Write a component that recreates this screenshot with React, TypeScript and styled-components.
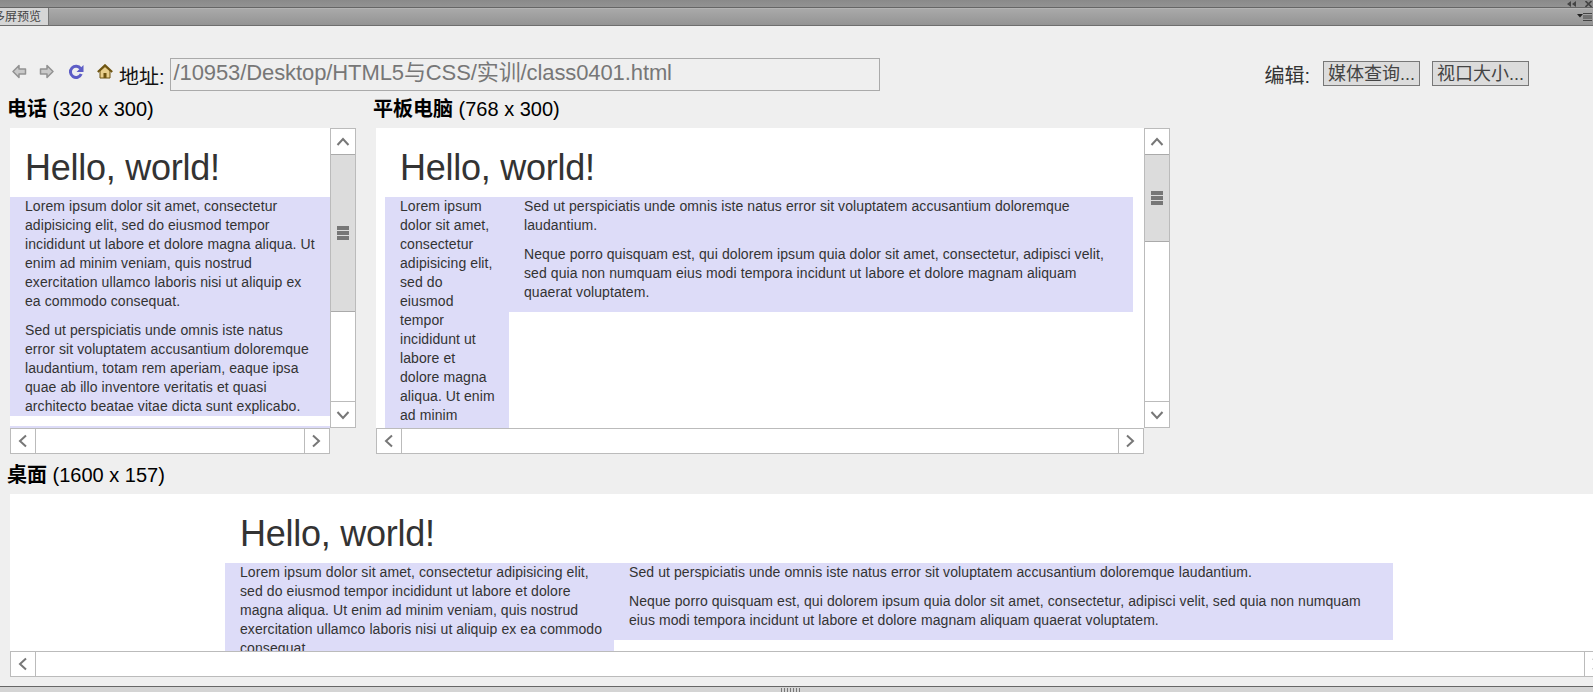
import React from 'react';
import styled, { createGlobalStyle } from 'styled-components';

const GlobalStyle = createGlobalStyle`
    html, body {
        margin: 0;
        height: 100%;
        overflow: hidden;
        background: #efefef;
        font-family: "Liberation Sans", "Noto Sans CJK SC", sans-serif;
    }
`;

const Page = styled.div`
    height: 692px;
    width: 1593px;
    display: flex;
    flex-direction: column;
    overflow: hidden;
`;

const TitleBar = styled.div`
    height: 7px;
    background: linear-gradient(#8a8a8a, #939393);
    border-bottom: 1px solid #666;
    display: flex;
    justify-content: flex-end;
    align-items: center;
    gap: 9px;
    padding-right: 1px;
`;

const TabStrip = styled.div`
    height: 16px;
    background: linear-gradient(#a9a9a9, #949494);
    border-top: 1px solid #b4b4b4;
    border-bottom: 1px solid #6e6e6e;
    display: flex;
    justify-content: space-between;
    align-items: center;
    padding-right: 1px;
`;

const Tab = styled.div`
    width: 48px;
    height: 17px;
    margin-top: -1px;
    overflow: hidden;
    white-space: nowrap;
    background: #d6d6d6;
    border-right: 1px solid #777;
    font-size: 12px;
    line-height: 18px;
    color: #444;
    text-indent: -7px;
`;

const Workspace = styled.main`
    flex: 1;
    min-height: 0;
    overflow: hidden;
    padding-left: 10px;
`;

const Toolbar = styled.div`
    height: 71px;
    box-sizing: border-box;
    margin-left: -10px;
    padding: 32px 64px 0 12px;
    display: flex;
    align-items: flex-start;
`;

const NavIcon = styled.svg<{ $gap: number }>`
    flex: none;
    margin-top: 6px;
    margin-right: ${props => props.$gap}px;
`;

const FieldLabel = styled.span`
    font-size: 20px;
    line-height: 24px;
    margin-top: 7px;
    color: #111;
    white-space: nowrap;
`;

const AddressField = styled.div`
    width: 710px;
    height: 33px;
    margin-left: 5px;
    box-sizing: border-box;
    border: 1px solid #aaa;
    padding-left: 3px;
    font-size: 22px;
    line-height: 27px;
    letter-spacing: -0.1px;
    color: #777;
    white-space: nowrap;
    overflow: hidden;
`;

const EditGroup = styled.div`
    margin-left: auto;
    display: flex;
    align-items: flex-start;
`;

const EditLabel = styled(FieldLabel)`
    margin-top: 6px;
    margin-right: 13px;
    color: #333;
`;

const EditButton = styled.div`
    width: 97px;
    height: 25px;
    margin-top: 3px;
    margin-right: 12px;
    box-sizing: border-box;
    border: 1px solid #777;
    background: #dcdcdc;
    font-size: 18px;
    line-height: 24px;
    text-align: center;
    color: #444;
    white-space: nowrap;
    overflow: hidden;

    &:last-child {
        margin-right: 0;
    }
`;

const DeviceRow = styled.div`
    display: flex;
    gap: 20px;
`;

const Device = styled.section`
    flex: none;
`;

const DesktopDevice = styled(Device)`
    margin-top: 9px;
`;

const DeviceLabel = styled.div`
    height: 24px;
    line-height: 24px;
    margin: 0 0 7px -3px;
    font-size: 20px;
    color: #000;
    white-space: nowrap;

    b {
        font-weight: 700;
    }
`;

const Frame = styled.div<{ $width: number; $height: number }>`
    display: grid;
    grid-template-columns: ${props => props.$width}px 26px;
    grid-template-rows: ${props => props.$height}px 26px;
`;

const Viewport = styled.div`
    background: #fff;
    overflow: hidden;
`;

const Container = styled.div<{ $inset: number }>`
    margin-left: ${props => props.$inset}px;
    margin-right: ${props => props.$inset}px;
`;

const Heading = styled.h1<{ $inset: number }>`
    margin: 0;
    padding: 20px 0 9px ${props => props.$inset}px;
    font-size: 36px;
    font-weight: 500;
    line-height: 40px;
    letter-spacing: -0.25px;
    color: #333;
`;

const Columns = styled.div<{ $left: number; $right: number }>`
    display: grid;
    grid-template-columns: ${props => props.$left}px ${props => props.$right}px;
    align-items: start;
`;

const Band = styled.div`
    background: #dddcf8;
    padding: 0 15px;
    overflow: hidden;
`;

const SideBand = styled(Band)<{ $trim: number }>`
    padding-right: ${props => props.$trim}px;
`;

const StackedBand = styled(Band)`
    margin-bottom: 10px;

    p:last-child {
        margin-bottom: 0;
    }
`;

const Copy = styled.p`
    margin: 0 0 10px;
    font-size: 14px;
    line-height: 19px;
    letter-spacing: 0.085px;
    color: #333;
`;

const VScroll = styled.div`
    display: flex;
    flex-direction: column;
    box-sizing: border-box;
    height: 100%;
    background: #fff;
    border: 1px solid #bbb;
`;

const ArrowBox = styled.div`
    flex: none;
    height: 25px;
    display: flex;
    align-items: center;
    justify-content: center;
`;

const ArrowBottom = styled(ArrowBox)`
    margin-top: auto;
    border-top: 1px solid #bbb;
`;

const Thumb = styled.div<{ $height: number }>`
    height: ${props => props.$height}px;
    box-sizing: border-box;
    background: #dcdcdc;
    border-top: 1px solid #aaa;
    border-bottom: 1px solid #aaa;
    display: flex;
    align-items: center;
    justify-content: center;
`;

const Grip = styled.div`
    width: 12px;
    height: 14px;
    background: repeating-linear-gradient(#777 0 4px, transparent 4px 5px);
`;

const HScroll = styled.div`
    height: 26px;
    box-sizing: border-box;
    display: flex;
    justify-content: space-between;
    background: #fff;
    border: 1px solid #bbb;
`;

const HButton = styled.div<{ $end?: boolean }>`
    width: 24px;
    display: flex;
    align-items: center;
    justify-content: center;
    ${props => props.$end ? 'border-left: 1px solid #bbb;' : 'border-right: 1px solid #bbb;'}
`;

const StatusBar = styled.div`
    height: 5px;
    background: #d4d4d4;
    border-top: 1px solid #666;
    display: flex;
    justify-content: center;
    align-items: flex-end;
`;

const StatusGrip = styled.div`
    width: 20px;
    height: 4px;
    margin-right: 11px;
    background: repeating-linear-gradient(90deg, #777 0 1px, transparent 1px 3px);
`;

const Chevron: React.FC<{ points: string }> = ({ points }) => (
    <svg width="14" height="14" viewBox="0 0 14 14">
        <polyline points={points} fill="none" stroke="#777" strokeWidth="2" />
    </svg>
);

const UP = '1.5,10 7,4 12.5,10';
const DOWN = '1.5,4 7,10 12.5,4';
const LEFT = '10,1.5 4,7 10,12.5';
const RIGHT = '3,1.5 9,7 3,12.5';

const LOREM = 'Lorem ipsum dolor sit amet, consectetur adipisicing elit, sed do eiusmod tempor incididunt ut labore et dolore magna aliqua. Ut enim ad minim veniam, quis nostrud exercitation ullamco laboris nisi ut aliquip ex ea commodo consequat.';
const SED_LONG = 'Sed ut perspiciatis unde omnis iste natus error sit voluptatem accusantium doloremque laudantium, totam rem aperiam, eaque ipsa quae ab illo inventore veritatis et quasi architecto beatae vitae dicta sunt explicabo.';
const SED = 'Sed ut perspiciatis unde omnis iste natus error sit voluptatem accusantium doloremque laudantium.';
const NEQUE = 'Neque porro quisquam est, qui dolorem ipsum quia dolor sit amet, consectetur, adipisci velit, sed quia non numquam eius modi tempora incidunt ut labore et dolore magnam aliquam quaerat voluptatem.';

const VerticalBar: React.FC<{ thumb: number }> = ({ thumb }) => (
    <VScroll>
        <ArrowBox><Chevron points={UP} /></ArrowBox>
        <Thumb $height={thumb}><Grip /></Thumb>
        <ArrowBottom><Chevron points={DOWN} /></ArrowBottom>
    </VScroll>
);

const HorizontalBar: React.FC = () => (
    <HScroll>
        <HButton><Chevron points={LEFT} /></HButton>
        <HButton $end><Chevron points={RIGHT} /></HButton>
    </HScroll>
);

const SplitContent: React.FC<{ left: number; right: number; trim: number }> = ({ left, right, trim }) => (
    <Columns $left={left} $right={right}>
        <SideBand $trim={trim}><Copy>{LOREM}</Copy></SideBand>
        <Band>
            <Copy>{SED}</Copy>
            <Copy>{NEQUE}</Copy>
        </Band>
    </Columns>
);

const BackIcon: React.FC<{ flip?: boolean; gap: number }> = ({ flip, gap }) => (
    <NavIcon $gap={gap} width="15" height="15" viewBox="0 0 15 15">
        <path
            d={flip ? 'M14 7.5 L8 1.5 V5 H1.5 V10 H8 V13.5 Z' : 'M1 7.5 L7 1.5 V5 H13.5 V10 H7 V13.5 Z'}
            fill="#c9c9c9"
            stroke="#929292"
            strokeWidth="1.5"
            strokeLinejoin="round"
        />
    </NavIcon>
);

const RefreshIcon: React.FC = () => (
    <NavIcon $gap={13} width="16" height="16" viewBox="0 0 16 16">
        <path d="M12.6 4.6 A5.6 5.6 0 1 0 13.2 10" fill="none" stroke="#5d5dc6" strokeWidth="3" />
        <path d="M15.5 1 V8 H8.5 Z" fill="#5d5dc6" />
    </NavIcon>
);

const HomeIcon: React.FC = () => (
    <NavIcon $gap={6} width="16" height="15" viewBox="0 0 16 15">
        <path d="M3 7 V14 H13 V7 L8 2.5 Z" fill="#e9cf8b" stroke="#6e5410" strokeWidth="1" />
        <path d="M0.8 8 L8 1.2 L15.2 8" fill="none" stroke="#6e5410" strokeWidth="2" />
        <rect x="6.5" y="9" width="3" height="5" fill="#6e5410" />
    </NavIcon>
);

const App: React.FC = () => (
    <Page>
        <GlobalStyle />
        <TitleBar>
            <svg width="9" height="6" viewBox="0 0 9 6">
                <path d="M4 0 V6 L0 3 Z M9 0 V6 L5 3 Z" fill="#444" />
            </svg>
            <svg width="7" height="6" viewBox="0 0 7 6">
                <path d="M0.5 0 L6.5 6 M6.5 0 L0.5 6" stroke="#444" strokeWidth="1.6" />
            </svg>
        </TitleBar>
        <TabStrip>
            <Tab>多屏预览</Tab>
            <svg width="15" height="8" viewBox="0 0 15 8">
                <path d="M0 1 H6 L3 4.5 Z" fill="#222" />
                <path d="M6 0.5 H15 M6 3 H15 M6 5 H15 M6 7.5 H15" stroke="#444" strokeWidth="1" />
            </svg>
        </TabStrip>
        <Workspace>
            <Toolbar>
                <BackIcon gap={12} />
                <BackIcon flip gap={14} />
                <RefreshIcon />
                <HomeIcon />
                <FieldLabel>地址:</FieldLabel>
                <AddressField>/10953/Desktop/HTML5与CSS/实训/class0401.html</AddressField>
                <EditGroup>
                    <EditLabel>编辑:</EditLabel>
                    <EditButton>媒体查询...</EditButton>
                    <EditButton>视口大小...</EditButton>
                </EditGroup>
            </Toolbar>
            <DeviceRow>
                <Device>
                    <DeviceLabel><b>电话</b> (320 x 300)</DeviceLabel>
                    <Frame $width={320} $height={300}>
                        <Viewport>
                            <Heading $inset={15}>Hello, world!</Heading>
                            <StackedBand>
                                <Copy>{LOREM}</Copy>
                                <Copy>{SED_LONG}</Copy>
                            </StackedBand>
                            <Band><Copy>{NEQUE}</Copy></Band>
                        </Viewport>
                        <VerticalBar thumb={158} />
                        <HorizontalBar />
                    </Frame>
                </Device>
                <Device>
                    <DeviceLabel><b>平板电脑</b> (768 x 300)</DeviceLabel>
                    <Frame $width={768} $height={300}>
                        <Viewport>
                            <Container $inset={9}>
                                <Heading $inset={15}>Hello, world!</Heading>
                                <SplitContent left={124} right={624} trim={12} />
                            </Container>
                        </Viewport>
                        <VerticalBar thumb={88} />
                        <HorizontalBar />
                    </Frame>
                </Device>
            </DeviceRow>
            <DesktopDevice>
                <DeviceLabel><b>桌面</b> (1600 x 157)</DeviceLabel>
                <Frame $width={1600} $height={157}>
                    <Viewport>
                        <Container $inset={215}>
                            <Heading $inset={15}>Hello, world!</Heading>
                            <SplitContent left={389} right={779} trim={7} />
                        </Container>
                    </Viewport>
                    <div />
                    <HorizontalBar />
                </Frame>
            </DesktopDevice>
        </Workspace>
        <StatusBar><StatusGrip /></StatusBar>
    </Page>
);

export default App;
